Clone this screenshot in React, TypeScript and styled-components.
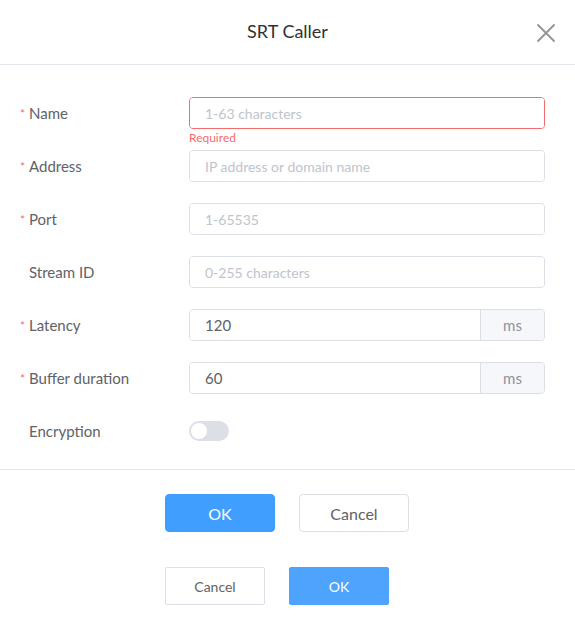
import React, { useState } from "react";
import styled, { createGlobalStyle } from "styled-components";

const GlobalStyle = createGlobalStyle`
  html, body {
    margin: 0;
    padding: 0;
    background: #ffffff;
  }
  body {
    font-family: Lato, "Open Sans", "Liberation Sans", sans-serif;
    color: #606266;
  }
  * {
    box-sizing: border-box;
  }
`;

type Field = {
  label: string;
  required: boolean;
  placeholder?: string;
  value?: string;
  unit?: string;
  error?: string;
};

const fields: Field[] = [
  { label: "Name", required: true, placeholder: "1-63 characters", error: "Required" },
  { label: "Address", required: true, placeholder: "IP address or domain name" },
  { label: "Port", required: true, placeholder: "1-65535" },
  { label: "Stream ID", required: false, placeholder: "0-255 characters" },
  { label: "Latency", required: true, value: "120", unit: "ms" },
  { label: "Buffer duration", required: true, value: "60", unit: "ms" },
];

const App = () => {
  const [encrypt, setEncrypt] = useState(false);

  return (
    <Dialog>
      <GlobalStyle />
      <Header>
        <Title>SRT Caller</Title>
        <CloseButton aria-label="close">
          <svg width="18" height="18" viewBox="0 0 18 18">
            <path
              d="M1 1 L17 17 M17 1 L1 17"
              stroke="#909399"
              strokeWidth="1.8"
              strokeLinecap="round"
            />
          </svg>
        </CloseButton>
      </Header>

      <Body>
        {fields.map((f) => (
          <FormRow key={f.label} $hasError={!!f.error}>
            <Label>
              <Star $show={f.required}>*</Star>
              {f.label}
            </Label>
            <Control>
              <InputGroup $error={!!f.error}>
                <Input placeholder={f.placeholder} defaultValue={f.value} />
                {f.unit && <Append>{f.unit}</Append>}
              </InputGroup>
              {f.error && <ErrorText>{f.error}</ErrorText>}
            </Control>
          </FormRow>
        ))}
        <FormRow>
          <Label>
            <Star $show={false}>*</Star>
            Encryption
          </Label>
          <Control>
            <Switch $on={encrypt} onClick={() => setEncrypt(!encrypt)}>
              <Knob />
            </Switch>
          </Control>
        </FormRow>
      </Body>

      <Footer>
        <ButtonRow>
          <Button $primary $width={110} $radius={4}>
            OK
          </Button>
          <Button $width={110} $radius={4}>
            Cancel
          </Button>
        </ButtonRow>
        <ButtonRow>
          <Button $width={100} $radius={2} $small>
            Cancel
          </Button>
          <Button $primary $alt $width={100} $radius={2} $small>
            OK
          </Button>
        </ButtonRow>
      </Footer>
    </Dialog>
  );
};

export default App;

const Dialog = styled.div`
  width: 575px;
  height: 628px;
  background: #ffffff;
  display: flex;
  flex-direction: column;
`;

const Header = styled.div`
  position: relative;
  height: 65px;
  border-bottom: 1px solid #e4e7ed;
  display: flex;
  align-items: center;
  justify-content: center;
  padding-bottom: 3px;
`;

const Title = styled.div`
  font-size: 18px;
  color: #303133;
`;

const CloseButton = styled.button`
  position: absolute;
  right: 20px;
  top: 24px;
  width: 18px;
  height: 18px;
  padding: 0;
  border: none;
  background: none;
  cursor: pointer;
  display: flex;
`;

const Body = styled.div`
  padding: 32px 30px 22px 20px;
  border-bottom: 1px solid #e4e7ed;
`;

const FormRow = styled.div<{ $hasError?: boolean }>`
  display: flex;
  align-items: flex-start;
  margin-bottom: ${(p) => (p.$hasError ? 0 : 21)}px;

  &:last-child {
    margin-bottom: 0;
  }
`;

const Label = styled.label`
  width: 169px;
  height: 32px;
  display: flex;
  align-items: center;
  font-size: 15px;
  color: #606266;
  flex-shrink: 0;
`;

const Star = styled.span<{ $show: boolean }>`
  width: 9px;
  color: #f56c6c;
  font-size: 12px;
  visibility: ${(p) => (p.$show ? "visible" : "hidden")};
`;

const Control = styled.div`
  flex: 1;
  display: flex;
  flex-direction: column;
  min-height: 32px;
  justify-content: center;
`;

const InputGroup = styled.div<{ $error: boolean }>`
  display: flex;
  height: 32px;
  border: 1px solid ${(p) => (p.$error ? "#f56c6c" : "#dcdfe6")};
  border-radius: 4px;
  overflow: hidden;
`;

const Input = styled.input`
  flex: 1;
  min-width: 0;
  border: none;
  outline: none;
  padding: 0 15px;
  font-family: inherit;
  font-size: 15px;
  color: #606266;

  &::placeholder {
    color: #c0c4cc;
    font-size: 14px;
  }
`;

const Append = styled.div`
  width: 64px;
  display: flex;
  align-items: center;
  justify-content: center;
  background: #f5f7fa;
  border-left: 1px solid #dcdfe6;
  color: #909399;
  font-size: 15px;
`;

const ErrorText = styled.div`
  height: 21px;
  padding-top: 3px;
  color: #f56c6c;
  font-size: 12px;
  line-height: 12px;
`;

const Switch = styled.div<{ $on: boolean }>`
  width: 40px;
  height: 20px;
  border-radius: 10px;
  background: ${(p) => (p.$on ? "#409eff" : "#dcdfe6")};
  padding: 2px;
  display: flex;
  justify-content: ${(p) => (p.$on ? "flex-end" : "flex-start")};
  cursor: pointer;
`;

const Knob = styled.div`
  width: 16px;
  height: 16px;
  border-radius: 50%;
  background: #ffffff;
`;

const Footer = styled.div`
  display: flex;
  flex-direction: column;
  align-items: flex-start;
  padding: 24px 0 0 165px;
  gap: 35px;
`;

const ButtonRow = styled.div`
  display: flex;
  gap: 24px;
`;

const Button = styled.button<{
  $primary?: boolean;
  $alt?: boolean;
  $small?: boolean;
  $width: number;
  $radius: number;
}>`
  width: ${(p) => p.$width}px;
  height: 38px;
  border-radius: ${(p) => p.$radius}px;
  font-family: inherit;
  font-size: ${(p) => (p.$small ? 14 : 16)}px;
  cursor: pointer;
  border: 1px solid
    ${(p) => (p.$primary ? (p.$alt ? "#4ea3fc" : "#409eff") : "#dcdfe6")};
  background: ${(p) => (p.$primary ? (p.$alt ? "#4ea3fc" : "#409eff") : "#ffffff")};
  color: ${(p) => (p.$primary ? "#ffffff" : "#606266")};
  padding: 0;
`;
